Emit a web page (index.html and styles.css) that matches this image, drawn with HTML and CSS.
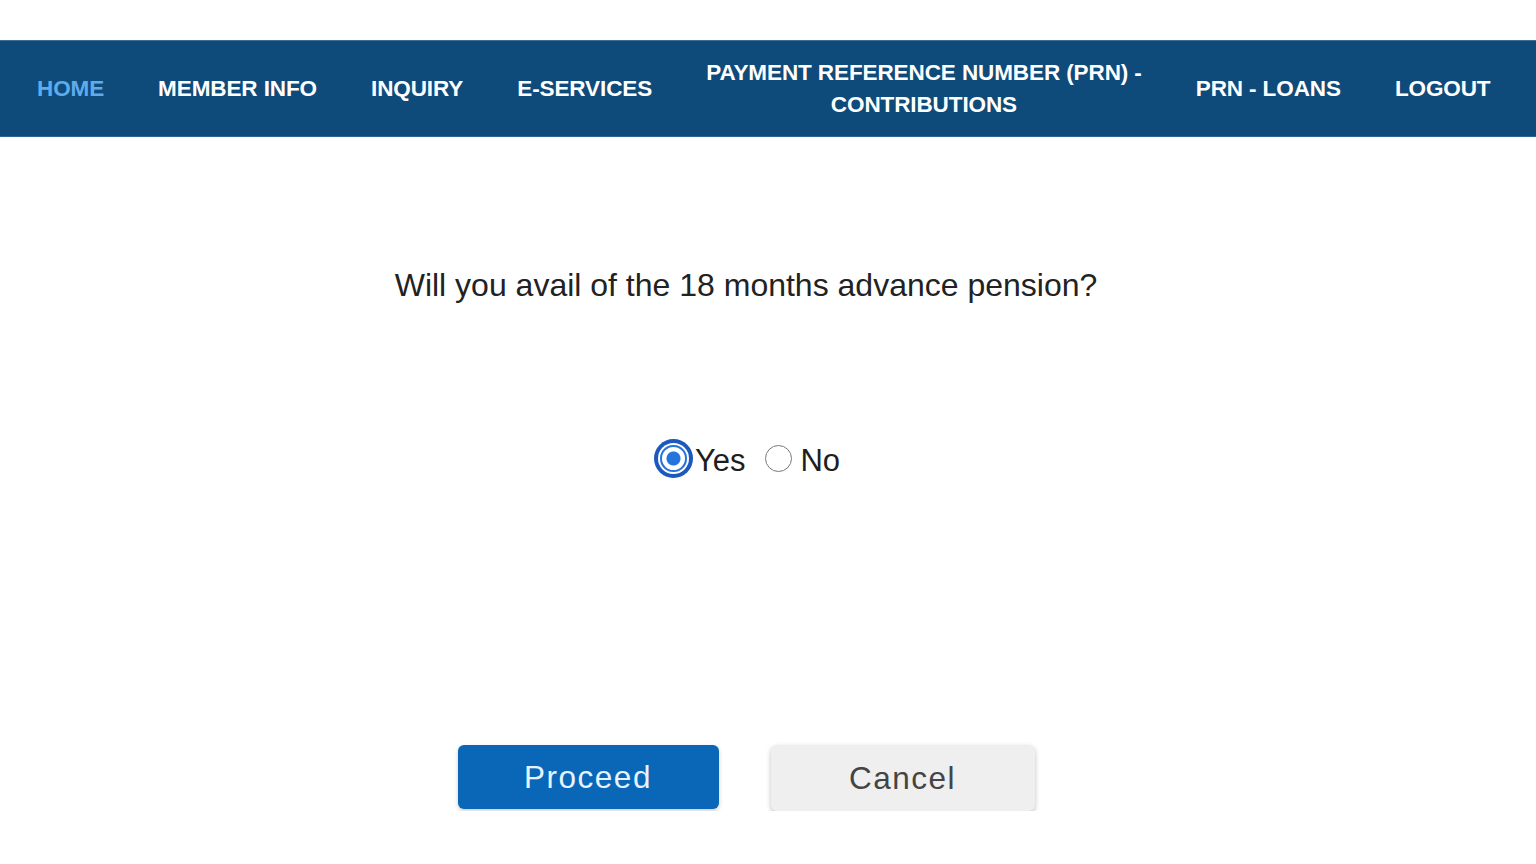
FILE: index.html
```html
<!DOCTYPE html>
<html lang="en">
<head>
    <meta charset="UTF-8">
    <title>My.SSS - Advance Pension</title>
    <link rel="stylesheet" href="styles.css">
</head>
<body>
<div class="topgap"></div>
<nav class="menu">
    <a class="menu-item active" href="#">HOME</a>
    <a class="menu-item" href="#">MEMBER INFO</a>
    <a class="menu-item" href="#">INQUIRY</a>
    <a class="menu-item" href="#">E-SERVICES</a>
    <a class="menu-item" href="#">PAYMENT REFERENCE NUMBER (PRN) -<br>CONTRIBUTIONS</a>
    <a class="menu-item" href="#">PRN - LOANS</a>
    <a class="menu-item" href="#">LOGOUT</a>
</nav>

<div class="content">
    <p class="question">Will you avail of the 18 months advance pension?</p>

    <div class="choices">
        <label class="choice">
            <input class="radio focused" type="radio" name="advance" value="Y" checked>Yes
        </label>
        <label class="choice">
            <input class="radio" type="radio" name="advance" value="N">No
        </label>
    </div>

    <div class="actions">
        <button class="btn btn-proceed" type="button">Proceed</button>
        <button class="btn btn-cancel" type="button">Cancel</button>
    </div>
</div>
</body>
</html>
```

FILE: styles.css
```css
body {
    margin: 0;
    padding: 0;
    font-family: "Liberation Sans", Arial, sans-serif;
    background: #fff;
    color: #222;
}

.topgap {
    height: 40px;
}

.menu {
    display: flex;
    align-items: center;
    height: 97px;
    padding-left: 10px;
    background-color: #0f4b7a;
    border-top: 1px solid #3d6f96;
    border-bottom: 1px solid #2d6592;
    box-sizing: border-box;
}

.menu-item {
    padding: 0 27px;
    color: #fff;
    text-decoration: none;
    text-align: center;
    font: bold 22.5px/32px "Liberation Sans", Arial, sans-serif;
    letter-spacing: -0.1px;
}

.menu-item.active {
    color: #5eaceb;
}

.content {
    display: flex;
    flex-direction: column;
    align-items: center;
    margin-right: 44px;
}

.question {
    margin: 128px 0 0;
    font-size: 32px;
    line-height: 40px;
    color: #222;
}

.choices {
    display: flex;
    align-items: center;
    gap: 20px;
    margin-top: 138px;
    padding-left: 8px;
    font-size: 31px;
    color: #1e1e1e;
}

.choice {
    display: flex;
    align-items: center;
}

.radio {
    appearance: none;
    -webkit-appearance: none;
    width: 27px;
    height: 27px;
    margin: 0 8px 5px 0;
    border: 1.5px solid #7a7a7a;
    border-radius: 50%;
    background: #fff;
    box-sizing: border-box;
}

.radio:checked {
    border: 2px solid #2474de;
    background: radial-gradient(circle, #2474de 0 6.5px, #fff 7.5px);
}

.radio.focused {
    box-shadow: 0 0 0 2px #fff, 0 0 0 6px #1c58bd;
    margin-right: 8px;
}

.actions {
    display: flex;
    gap: 52px;
    margin-top: 266px;
}

.btn {
    height: 64px;
    border: none;
    border-radius: 6px;
    font: 31.5px "Liberation Sans", Arial, sans-serif;
    letter-spacing: 1.5px;
    cursor: pointer;
}

.btn-proceed {
    width: 261px;
    background: #0a66b7;
    color: #e6f4ff;
    box-shadow: 0 2px 4px rgba(0, 0, 0, 0.2);
}

.btn-cancel {
    width: 264px;
    height: 66px;
    background: #efefef;
    color: #444;
    box-shadow: 0 2px 5px rgba(0, 0, 0, 0.25);
}
```
